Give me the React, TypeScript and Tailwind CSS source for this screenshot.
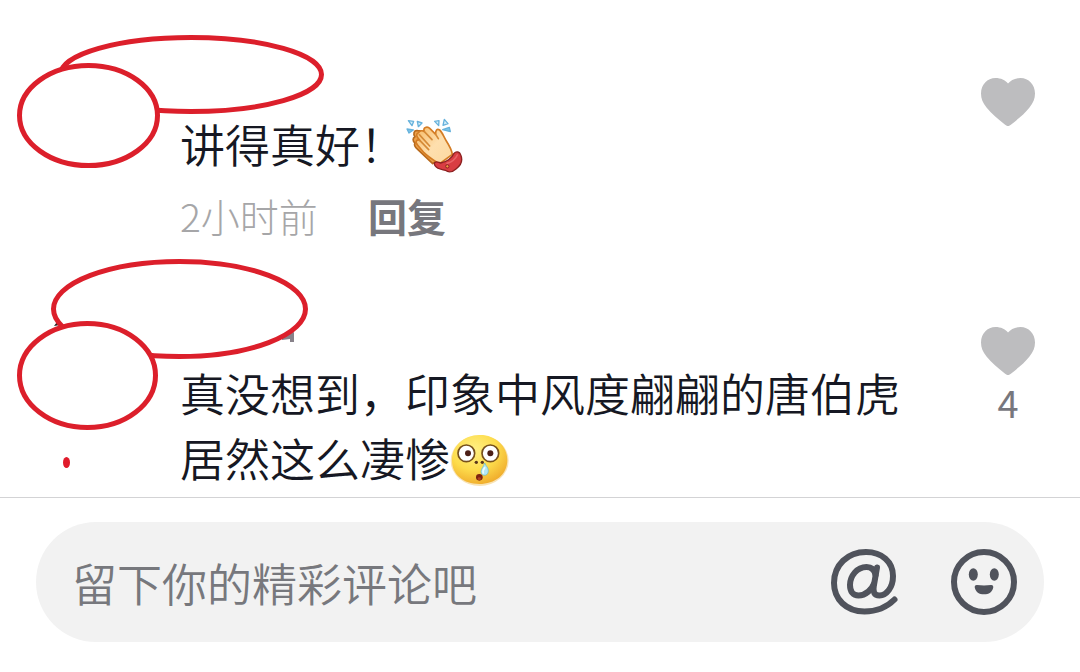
import { useState, type ReactNode } from "react";

function Heart() {
  return (
    <svg width="54" height="48" viewBox="0 0 54 48" aria-hidden="true">
      <path
        d="M27 48C25.800 48 25 47.400 23.500 46.200C17 41 10.500 36 5.500 29.500C1.800 25 0 20.500 0 15.500C0 6.500 6.300 0 14.500 0C19.800 0 24.300 2.200 27 5.500C29.700 2.200 34.200 0 39.500 0C47.700 0 54 6.500 54 15.500C54 20.500 52.200 25 48.500 29.500C43.500 36 37 41 30.500 46.200C29 47.400 28.200 48 27 48Z"
        fill="#bdbdbf"
      />
    </svg>
  );
}

function ClapEmoji() {
  return (
    <svg className="mt-[7px] inline-block align-top" width="60" height="56" viewBox="30 24 180 168" role="img" aria-label="鼓掌">
      <defs>
        <linearGradient id="skin" x1="0" y1="0" x2="1" y2="1">
          <stop offset="0" stopColor="#f7b964" />
          <stop offset="0.5" stopColor="#fedfae" />
          <stop offset="1" stopColor="#fcd9a0" />
        </linearGradient>
      </defs>
      <g fill="#d8f0fa" stroke="#67b2dc" strokeWidth="4" strokeLinejoin="round">
        <path d="M40 32L56 34L51 47Z" />
        <path d="M67 34L81 39L70 50Z" />
        <path d="M36 57L55 60L42 69Z" fill="#7cc4e8" />
        <path d="M119 34L132 32L131 47Z" />
        <path d="M148 28L159 41L144 46Z" />
        <path d="M143 59L163 52L166 65Z" fill="#7cc4e8" />
      </g>
      <path
        d="M68 62C56 60 54 72 60 80C52 84 53 94 60 99C56 105 61 112 68 118L113 161L136 144L100 66Z"
        fill="#eda14a"
        stroke="#b96a1c"
        strokeWidth="5"
        strokeLinejoin="round"
      />
      <path
        d="M70 68C76 60 84 62 88 65C82 52 97 47 105 56L122 73C121 61 126 55 134 60C142 67 146 80 154 93C163 107 170 119 172 133L133 162C117 150 100 142 87 128L67 104C58 94 67 86 75 92C62 78 63 71 70 68Z"
        fill="url(#skin)"
        stroke="#d47c24"
        strokeWidth="5"
        strokeLinejoin="round"
      />
      <path d="M88 65L111 89M73 74L104 108M75 92L101 119M122 73L130 86" fill="none" stroke="#d58a37" strokeWidth="5" strokeLinecap="round" />
      <path
        d="M119 158C126 152 132 159 137 159C153 157 171 145 177 130C184 122 194 126 197 134C204 150 198 165 184 176C173 186 160 188 151 181C139 178 126 177 121 168C118 164 117 161 119 158Z"
        fill="#d93d43"
        stroke="#8c2020"
        strokeWidth="4"
        strokeLinejoin="round"
      />
      <path d="M156 160C171 156 182 146 187 135" fill="none" stroke="#ea6468" strokeWidth="5" strokeLinecap="round" />
      <circle cx="157" cy="169" r="5" fill="#f19a42" stroke="#8c2020" strokeWidth="3" />
    </svg>
  );
}

function ShockedEmoji() {
  return (
    <svg className="mt-[7px] inline-block align-top" width="60" height="56" viewBox="30 22 180 168" role="img" aria-label="惊讶">
      <defs>
        <radialGradient id="face" cx="0.4" cy="0.3" r="0.75">
          <stop offset="0" stopColor="#fff084" />
          <stop offset="0.55" stopColor="#fddc4c" />
          <stop offset="1" stopColor="#efa92a" />
        </radialGradient>
      </defs>
      <ellipse cx="119" cy="108" rx="87" ry="76" fill="#f8e3b5" />
      <path
        d="M117 31C163 29 202 62 202 106C202 151 164 178 118 178C71 178 36 151 36 107C36 63 72 32 117 31Z"
        fill="url(#face)"
      />
      <g fill="#ffffff" stroke="#76501c" strokeWidth="5">
        <circle cx="79" cy="86" r="25" />
        <circle cx="151" cy="86" r="25" />
      </g>
      <circle cx="84" cy="86" r="9" fill="#4c1f17" />
      <circle cx="151" cy="86" r="9" fill="#4c1f17" />
      <circle cx="109" cy="113" r="5" fill="#59351a" />
      <circle cx="127" cy="113" r="5" fill="#59351a" />
      <path d="M134 115C138 125 145 128 145 139C145 155 124 157 123 141C123 132 131 127 134 115Z" fill="#b4e8f5" stroke="#65b8cf" strokeWidth="2" />
      <path d="M134 129C130 134 128 140 130 145" fill="none" stroke="#f0fcff" strokeWidth="5" strokeLinecap="round" />
      <circle cx="118" cy="158" r="10" fill="#7d2210" />
      <ellipse cx="118" cy="162" rx="5" ry="4" fill="#b04020" />
    </svg>
  );
}

function AtIcon() {
  return (
    <svg width="72" height="72" viewBox="0 0 72 72" fill="none" stroke="#50535c" strokeWidth="6" strokeLinecap="round" strokeLinejoin="round" aria-hidden="true">
      <path d="M66.500 53.500C59 61 48 65.500 36.500 65.500C18 65.500 6 53 6 37C6 19 19.500 6 38 6C54 6 65 16 65 30C65 41.500 58.500 49.500 51.500 49.500C46 49.500 44.800 45.500 45.800 40L49 21.500" />
      <path d="M47.500 29C46.500 23.500 43.500 21 38.500 21C29 21 22 30 22 39C22 45.500 25 49.500 30.500 49.500C38 49.500 44 43 45.800 38" />
    </svg>
  );
}

function SmileIcon() {
  return (
    <svg width="72" height="72" viewBox="0 0 72 72" aria-hidden="true">
      <circle cx="36" cy="36" r="30" fill="none" stroke="#50535c" strokeWidth="6" />
      <g fill="#50535c">
        <ellipse cx="25.300" cy="28.500" rx="4.500" ry="6.200" />
        <ellipse cx="46.300" cy="28.500" rx="4.500" ry="6.200" />
        <path d="M29 39C33.500 39.500 38.500 39.500 43 39C44.800 38.900 45.600 40.200 45.200 41.700C44.200 46 41 48.300 36 48.300C31 48.300 27.800 46 26.800 41.700C26.400 40.200 27.200 38.900 29 39Z" />
      </g>
    </svg>
  );
}

// hand-drawn rings over the avatar and the user name
function FirstRings() {
  return (
    <svg className="absolute left-0 top-0" width="340" height="249" fill="#ffffff" stroke="#dc1f2b" strokeWidth="5" aria-hidden="true">
      <ellipse cx="191" cy="74.500" rx="130.500" ry="37" />
      <ellipse cx="88.500" cy="115.500" rx="69" ry="50" />
    </svg>
  );
}

function SecondRings() {
  return (
    <svg className="absolute left-0 top-0" width="340" height="249" fill="#ffffff" stroke="#dc1f2b" strokeWidth="5" aria-hidden="true">
      <path d="M282 88L294 83V93H290V90L282 91Z" fill="#88828a" stroke="none" />
      <path d="M54 77L57 73L60 76Z" fill="#222222" stroke="none" />
      <ellipse cx="179.500" cy="60" rx="126" ry="47.500" />
      <ellipse cx="87.500" cy="126.500" rx="68" ry="52" />
      <ellipse cx="66.500" cy="213.500" rx="3.500" ry="5.500" fill="#e01b2b" stroke="none" />
    </svg>
  );
}

type CommentProps = {
  rings: ReactNode;
  children: ReactNode;
  time?: string;
  likes?: number;
};

function Comment({ rings, children, time, likes }: CommentProps) {
  const [count, setCount] = useState(likes);

  return (
    <article className="relative flex items-start">
      {rings}
      <div className="relative ml-[180px] min-w-0 flex-1 pt-[111px]">
        <p className="text-[45px] font-[350] leading-[65px] text-[#161823]">{children}</p>
        {time && (
          <div className="mt-4 mb-[11px] flex h-[46px] items-center gap-[50px] text-[39px] leading-[46px]">
            <time className="font-light text-[#a6a6a8]">{time}</time>
            <button type="button" className="font-bold text-[#77777d]">
              回复
            </button>
          </div>
        )}
      </div>
      <button
        type="button"
        aria-label="点赞"
        className="mr-9 mt-[78px] flex w-[72px] flex-col items-center gap-1"
        onClick={() => setCount((count ?? 0) + 1)}
      >
        <Heart />
        {count !== undefined && (
          <span className="text-[38px] leading-[46px] text-[#77777d]">{count}</span>
        )}
      </button>
    </article>
  );
}

export default function App() {
  const [text, setText] = useState("");

  return (
    <main className="min-h-screen bg-white font-['Noto_Sans_CJK_SC',sans-serif]">
      <section className="pb-[7px]">
        <Comment rings={<FirstRings />} time="2小时前">
          讲得真好！
          <ClapEmoji />
        </Comment>
        <Comment rings={<SecondRings />} likes={4}>
          真没想到，印象中风度翩翩的唐伯虎
          <br />
          居然这么凄惨
          <ShockedEmoji />
        </Comment>
      </section>
      <form className="border-t border-[#d3d3d5] px-9 pt-6 pb-[30px]" onSubmit={(e) => e.preventDefault()}>
        <div className="flex h-[120px] items-center gap-12 rounded-full bg-[#f2f2f2] pl-9 pr-6">
          <input
            className="min-w-0 flex-1 bg-transparent text-[45px] font-[350] leading-[65px] text-[#161823] outline-none placeholder:text-[#77787d]"
            type="text"
            aria-label="评论"
            placeholder="留下你的精彩评论吧"
            value={text}
            onChange={(e) => setText(e.target.value)}
          />
          <button type="button" aria-label="提及好友" onClick={() => setText(text + "@")}>
            <AtIcon />
          </button>
          <button type="button" aria-label="表情">
            <SmileIcon />
          </button>
        </div>
      </form>
    </main>
  );
}
